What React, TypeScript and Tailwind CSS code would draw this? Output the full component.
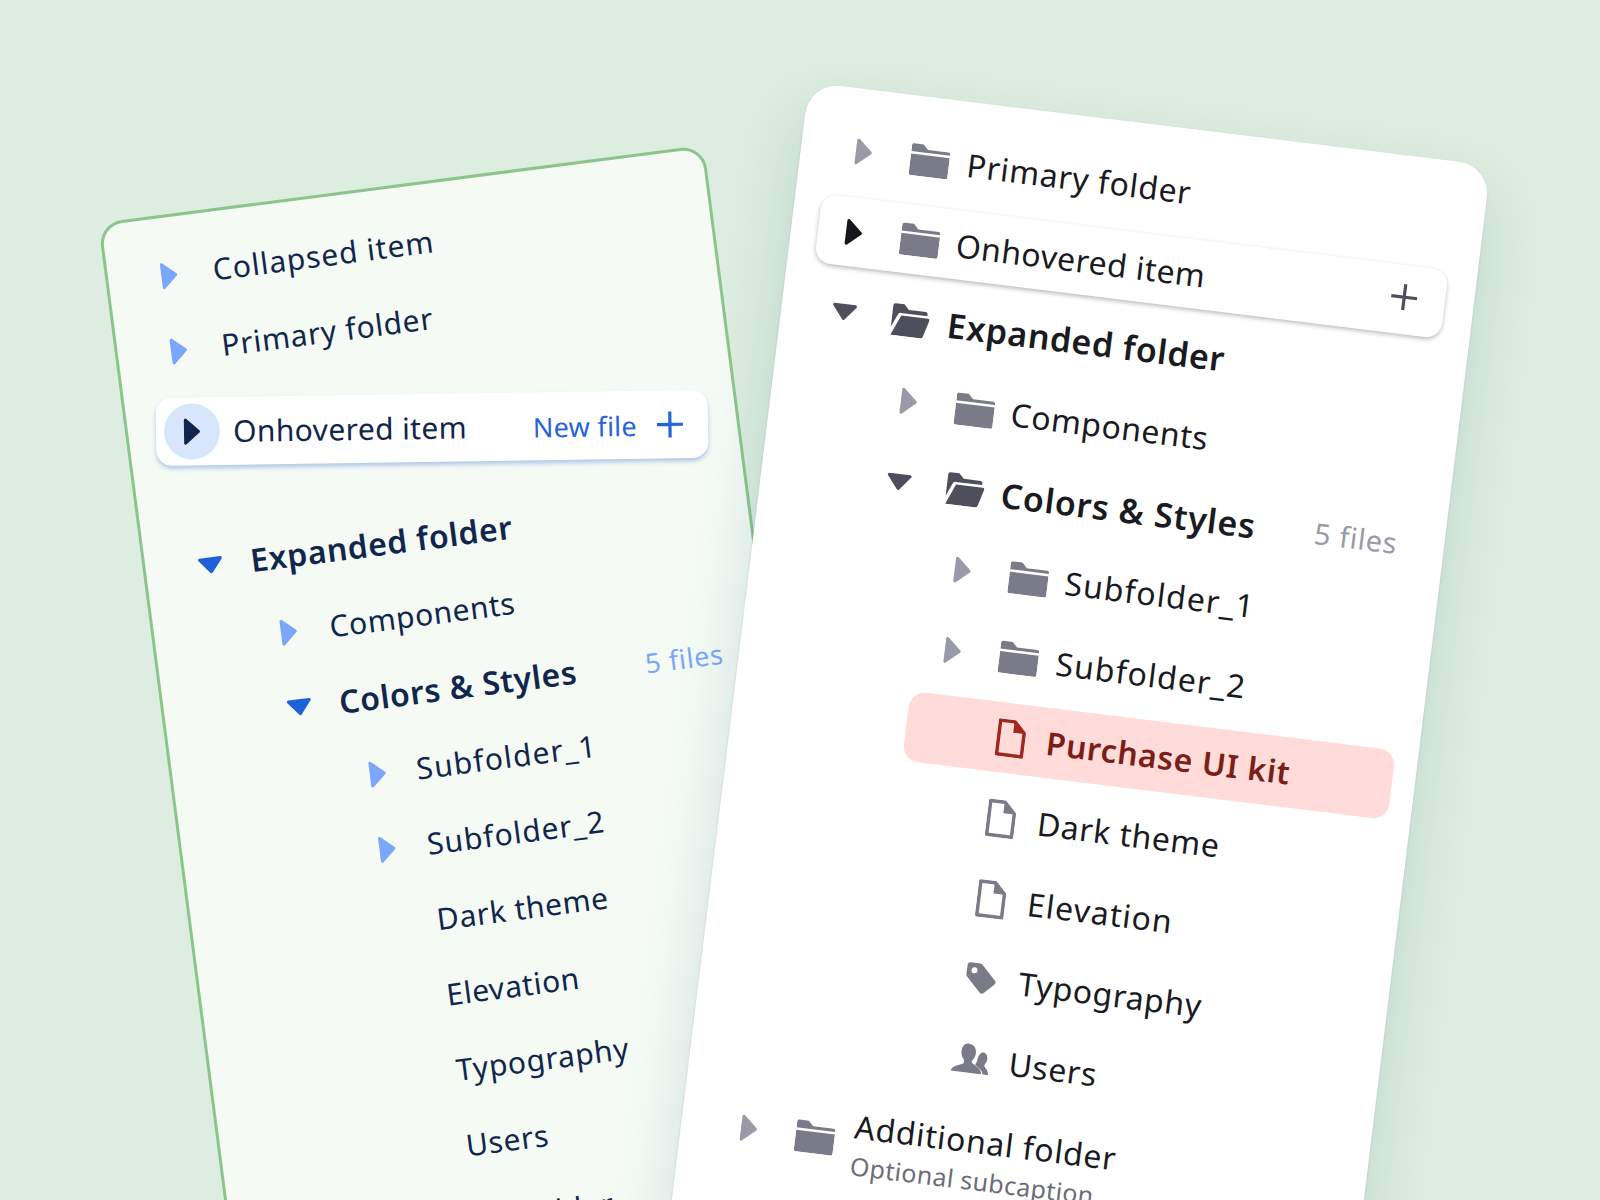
function ArrowRight({ className }: { className: string }) {
  return (
    <svg viewBox="0 0 18 28" className={`w-[18px] h-[28px] shrink-0 ${className}`}>
      <path d="M2.5 2.5 15.5 14 2.5 25.5z" fill="currentColor" stroke="currentColor" strokeWidth="3" strokeLinejoin="round" />
    </svg>
  );
}

function ArrowDown({ className }: { className: string }) {
  return (
    <svg viewBox="0 0 26 18" className={`w-[26px] h-[18px] shrink-0 ${className}`}>
      <path d="M2.5 2.5h21L13 15.5z" fill="currentColor" stroke="currentColor" strokeWidth="3" strokeLinejoin="round" />
    </svg>
  );
}

function FolderClosed() {
  return (
    <svg viewBox="0 0 39 33" className="w-[39px] h-[33px] shrink-0 text-[#7a7a88]" fill="currentColor">
      <path d="M0 3a2 2 0 0 1 2-2h9.500l5 5H37a2 2 0 0 1 2 2v1H0z" />
      <path d="M0 11.500h39V31a2 2 0 0 1-2 2H2a2 2 0 0 1-2-2z" />
    </svg>
  );
}

function FolderOpen() {
  return (
    <svg viewBox="0 0 39 33" className="w-[39px] h-[33px] shrink-0 text-[#4e4e5c]" fill="currentColor">
      <path d="M1 3a2 2 0 0 1 2-2h9l5 5h17a2 2 0 0 1 2 2v2H9.500a3 3 0 0 0-3 2L1 25z" />
      <path d="M10 12.500h27a1.500 1.500 0 0 1 1.500 2L34 31a2.500 2.500 0 0 1-2.400 2H1.500z" />
    </svg>
  );
}

function FileIcon({ className }: { className: string }) {
  return (
    <svg viewBox="0 0 29 38" className={`w-[29px] h-[38px] shrink-0 ${className}`}>
      <path d="M2 2h14.500L27 12.500V36H2z" fill="none" stroke="currentColor" strokeWidth="3.500" strokeLinejoin="round" />
      <path d="M16 2l11 11H16z" fill="currentColor" />
    </svg>
  );
}

function TagIcon() {
  return (
    <svg viewBox="0 0 32 32" className="w-[32px] h-[32px] shrink-0 text-[#7a7a88]">
      <path
        fillRule="evenodd"
        fill="currentColor"
        d="M4 1h9.500a3 3 0 0 1 2.100.900l14.300 14.300a3 3 0 0 1 0 4.200l-9.500 9.500a3 3 0 0 1-4.200 0L1.900 15.600A3 3 0 0 1 1 13.500V4a3 3 0 0 1 3-3zm4.500 4.500a3 3 0 1 0 0 6 3 3 0 0 0 0-6z"
      />
    </svg>
  );
}

function UsersIcon() {
  return (
    <svg viewBox="0 0 38 32" className="w-[38px] h-[32px] shrink-0 text-[#7a7a88]" fill="currentColor">
      <path d="M15 1c5 0 8 3.500 8 8.500 0 3.500-1.200 6-3 8v2c2.500 2 6.500 3 9 6 1 1.200 1.500 3 1.500 4.500H0c.5-2 1.500-3.500 3-4.500 3-2 7-3 9-4.500v-3.500c-2-2-3.500-4.500-3.500-8C8.500 4.500 10.500 1 15 1z" />
      <path d="M30 8c3.500 0 5 2.800 5 6 0 2.500-.8 4.400-2 5.800v2c1.500 1.500 3 2.500 4 5 .3 1 .5 2.200.5 3.200h-5c-.5-2-2-4-4-5.500-2-1.300-3.700-2.300-5-3.300 1-1.500 1.500-3.200 1.700-5 .5-4 2-8.200 4.800-8.200z" />
    </svg>
  );
}

function Plus({ className }: { className: string }) {
  return (
    <svg viewBox="0 0 28 28" className={`w-[28px] h-[28px] shrink-0 ${className}`}>
      <path d="M14 1v26M1 14h26" stroke="currentColor" strokeWidth="3.200" fill="none" />
    </svg>
  );
}

const leftArrow = "text-[#7aa7fb]";
const leftArrowDown = "text-[#1f62d6]";
const rightArrow = "text-[#9a9aa8]";
const rightArrowDown = "text-[#4e4e5c]";

function LeftPanel() {
  const text = "text-[30px] leading-none text-[#10264d] whitespace-nowrap";
  const bold = "text-[32px] leading-none tracking-[0.018em] font-semibold text-[#10264d] whitespace-nowrap";
  const row = "flex items-center h-[76px]";
  return (
    <div className="absolute left-[98px] top-[223px] w-[611px] h-[1200px] origin-top-left rotate-[-7.35deg] rounded-[24px] border-[3px] border-[#8cc58c] bg-[#f5faf5] pt-[20px]">
      <div className={`${row} pl-[52px] gap-[35px]`}>
        <ArrowRight className={leftArrow} />
        <span className={`${text} tracking-[0.033em]`}>Collapsed item</span>
      </div>
      <div className={`${row} pl-[52px] gap-[34px]`}>
        <ArrowRight className={leftArrow} />
        <span className={`${text} tracking-[0.025em]`}>Primary folder</span>
      </div>
      <div className="flex items-center ml-[26px] mt-[37px] mb-[36px] w-[552px] h-[68px] rotate-[6.5deg] rounded-[16px] bg-white pl-[8px] pr-[24px] shadow-[0_3px_4px_rgba(90,140,220,0.45)]">
        <div className="flex items-center justify-center w-[56px] h-[56px] rounded-full bg-[#d8e6fd]">
          <ArrowRight className="text-[#10264d]" />
        </div>
        <span className={`${text} ml-[13px] tracking-[0.013em]`}>Onhovered item</span>
        <span className="ml-auto text-[27px] leading-none tracking-[0.01em] text-[#2563d9] whitespace-nowrap">New file</span>
        <Plus className="text-[#2563d9] ml-[19px]" />
      </div>
      <div className={`${row} pl-[52px] gap-[27px]`}>
        <ArrowDown className={leftArrowDown} />
        <span className={bold}>Expanded folder</span>
      </div>
      <div className={`${row} pl-[125px] gap-[32px]`}>
        <ArrowRight className={leftArrow} />
        <span className={`${text} tracking-[0.02em]`}>Components</span>
      </div>
      <div className={`${row} pl-[122px] pr-[43px] gap-[27px]`}>
        <ArrowDown className={leftArrowDown} />
        <span className={bold}>Colors &amp; Styles</span>
        <span className="ml-auto text-[27px] leading-none tracking-[0.025em] text-[#7aa7fb] whitespace-nowrap">5 files</span>
      </div>
      <div className={`${row} pl-[195px] gap-[30px]`}>
        <ArrowRight className={leftArrow} />
        <span className={`${text} tracking-[0.042em]`}>Subfolder_1</span>
      </div>
      <div className={`${row} pl-[195px] gap-[31px]`}>
        <ArrowRight className={leftArrow} />
        <span className={`${text} tracking-[0.033em]`}>Subfolder_2</span>
      </div>
      {["Dark theme", "Elevation", "Typography", "Users"].map((name) => (
        <div key={name} className={`${row} pl-[244px]`}>
          <span className={`${text} tracking-[0.022em]`}>{name}</span>
        </div>
      ))}
      <div className={`${row} pl-[85px] gap-[32px]`}>
        <ArrowRight className={leftArrow} />
        <span className={`${text} tracking-[0.025em]`}>Additional folder</span>
      </div>
    </div>
  );
}

function RightPanel() {
  const text = "text-[32px] leading-none text-[#1a1a22] whitespace-nowrap";
  const bold = "text-[34px] leading-none font-semibold text-[#1a1a22] whitespace-nowrap";
  const row = "flex items-center h-[80.600px]";
  return (
    <div className="absolute left-[809px] top-[82px] w-[687px] h-[1300px] origin-top-left rotate-[7deg] rounded-[32px] bg-white pt-[23px] shadow-[0_1px_2px_rgba(120,120,150,0.3),0_30px_60px_rgba(60,120,140,0.2)]">
      <div className={`${row} pl-[54px] gap-[38px]`}>
        <ArrowRight className={rightArrow} />
        <FolderClosed />
        <span className={`${text} ml-[-20px] tracking-[0.022em]`}>Primary folder</span>
      </div>
      <div className="flex items-center ml-[27px] my-[5.800px] w-[631px] h-[69px] rounded-[16px] bg-white pl-[27px] pr-[27px] gap-[38px] shadow-[0_2px_4px_rgba(30,30,40,0.3)]">
        <ArrowRight className="text-[#16161d]" />
        <FolderClosed />
        <span className={`${text} ml-[-21px] tracking-[0.016em]`}>Onhovered item</span>
        <Plus className="text-[#4e4e5c] ml-auto mb-[6px]" />
      </div>
      <div className={`${row} pl-[50px] gap-[34px]`}>
        <ArrowDown className={rightArrowDown} />
        <FolderOpen />
        <span className={`${bold} ml-[-16px] tracking-[0.016em]`}>Expanded folder</span>
      </div>
      <div className={`${row} pl-[129px] gap-[38px]`}>
        <ArrowRight className={rightArrow} />
        <FolderClosed />
        <span className={`${text} ml-[-21px] tracking-[0.018em]`}>Components</span>
      </div>
      <div className={`${row} pl-[125px] pr-[47px] gap-[34px]`}>
        <ArrowDown className={rightArrowDown} />
        <FolderOpen />
        <span className={`${bold} ml-[-17px] tracking-[0.022em]`}>Colors &amp; Styles</span>
        <span className="ml-auto text-[29px] leading-none tracking-[0.02em] text-[#9a9aa8] whitespace-nowrap">5 files</span>
      </div>
      <div className={`${row} pl-[203px] gap-[38px]`}>
        <ArrowRight className={rightArrow} />
        <FolderClosed />
        <span className={`${text} ml-[-21px] tracking-[0.035em]`}>Subfolder_1</span>
      </div>
      <div className={`${row} pl-[203px] gap-[38px]`}>
        <ArrowRight className={rightArrow} />
        <FolderClosed />
        <span className={`${text} ml-[-20px] tracking-[0.035em]`}>Subfolder_2</span>
      </div>
      <div className="flex items-center ml-[175px] my-[5.300px] w-[489px] h-[70px] rounded-[16px] bg-[#ffdcd9] pl-[91px] gap-[21px]">
        <FileIcon className="text-[#a1261f]" />
        <span className="text-[32px] leading-none tracking-[0.02em] font-semibold text-[#7c1d18] whitespace-nowrap">Purchase UI kit</span>
      </div>
      <div className={`${row} pl-[266px] gap-[22px]`}>
        <FileIcon className="text-[#7a7a88]" />
        <span className={`${text} tracking-[0.02em]`}>Dark theme</span>
      </div>
      <div className={`${row} pl-[266px] gap-[22px]`}>
        <FileIcon className="text-[#7a7a88]" />
        <span className={`${text} tracking-[0.035em]`}>Elevation</span>
      </div>
      <div className={`${row} pl-[264px] gap-[22px]`}>
        <TagIcon />
        <span className={`${text} tracking-[0.018em]`}>Typography</span>
      </div>
      <div className={`${row} pl-[261px] gap-[19px]`}>
        <UsersIcon />
        <span className={`${text} tracking-[0.022em]`}>Users</span>
      </div>
      <div className={`${row} pl-[59px] mt-[16px] gap-[38px]`}>
        <ArrowRight className={rightArrow} />
        <FolderClosed />
        <div className="flex flex-col gap-[11px] ml-[-19px] mt-[6px]">
          <span className={`${text} tracking-[0.022em]`}>Additional folder</span>
          <span className="text-[25px] leading-none tracking-[0.015em] text-[#6c6c7a] whitespace-nowrap">Optional subcaption</span>
        </div>
      </div>
    </div>
  );
}

export default function App() {
  return (
    <div className="relative w-[1600px] h-[1200px] overflow-hidden bg-[#ddeddf] font-['Noto_Sans',sans-serif]">
      <LeftPanel />
      <RightPanel />
    </div>
  );
}
